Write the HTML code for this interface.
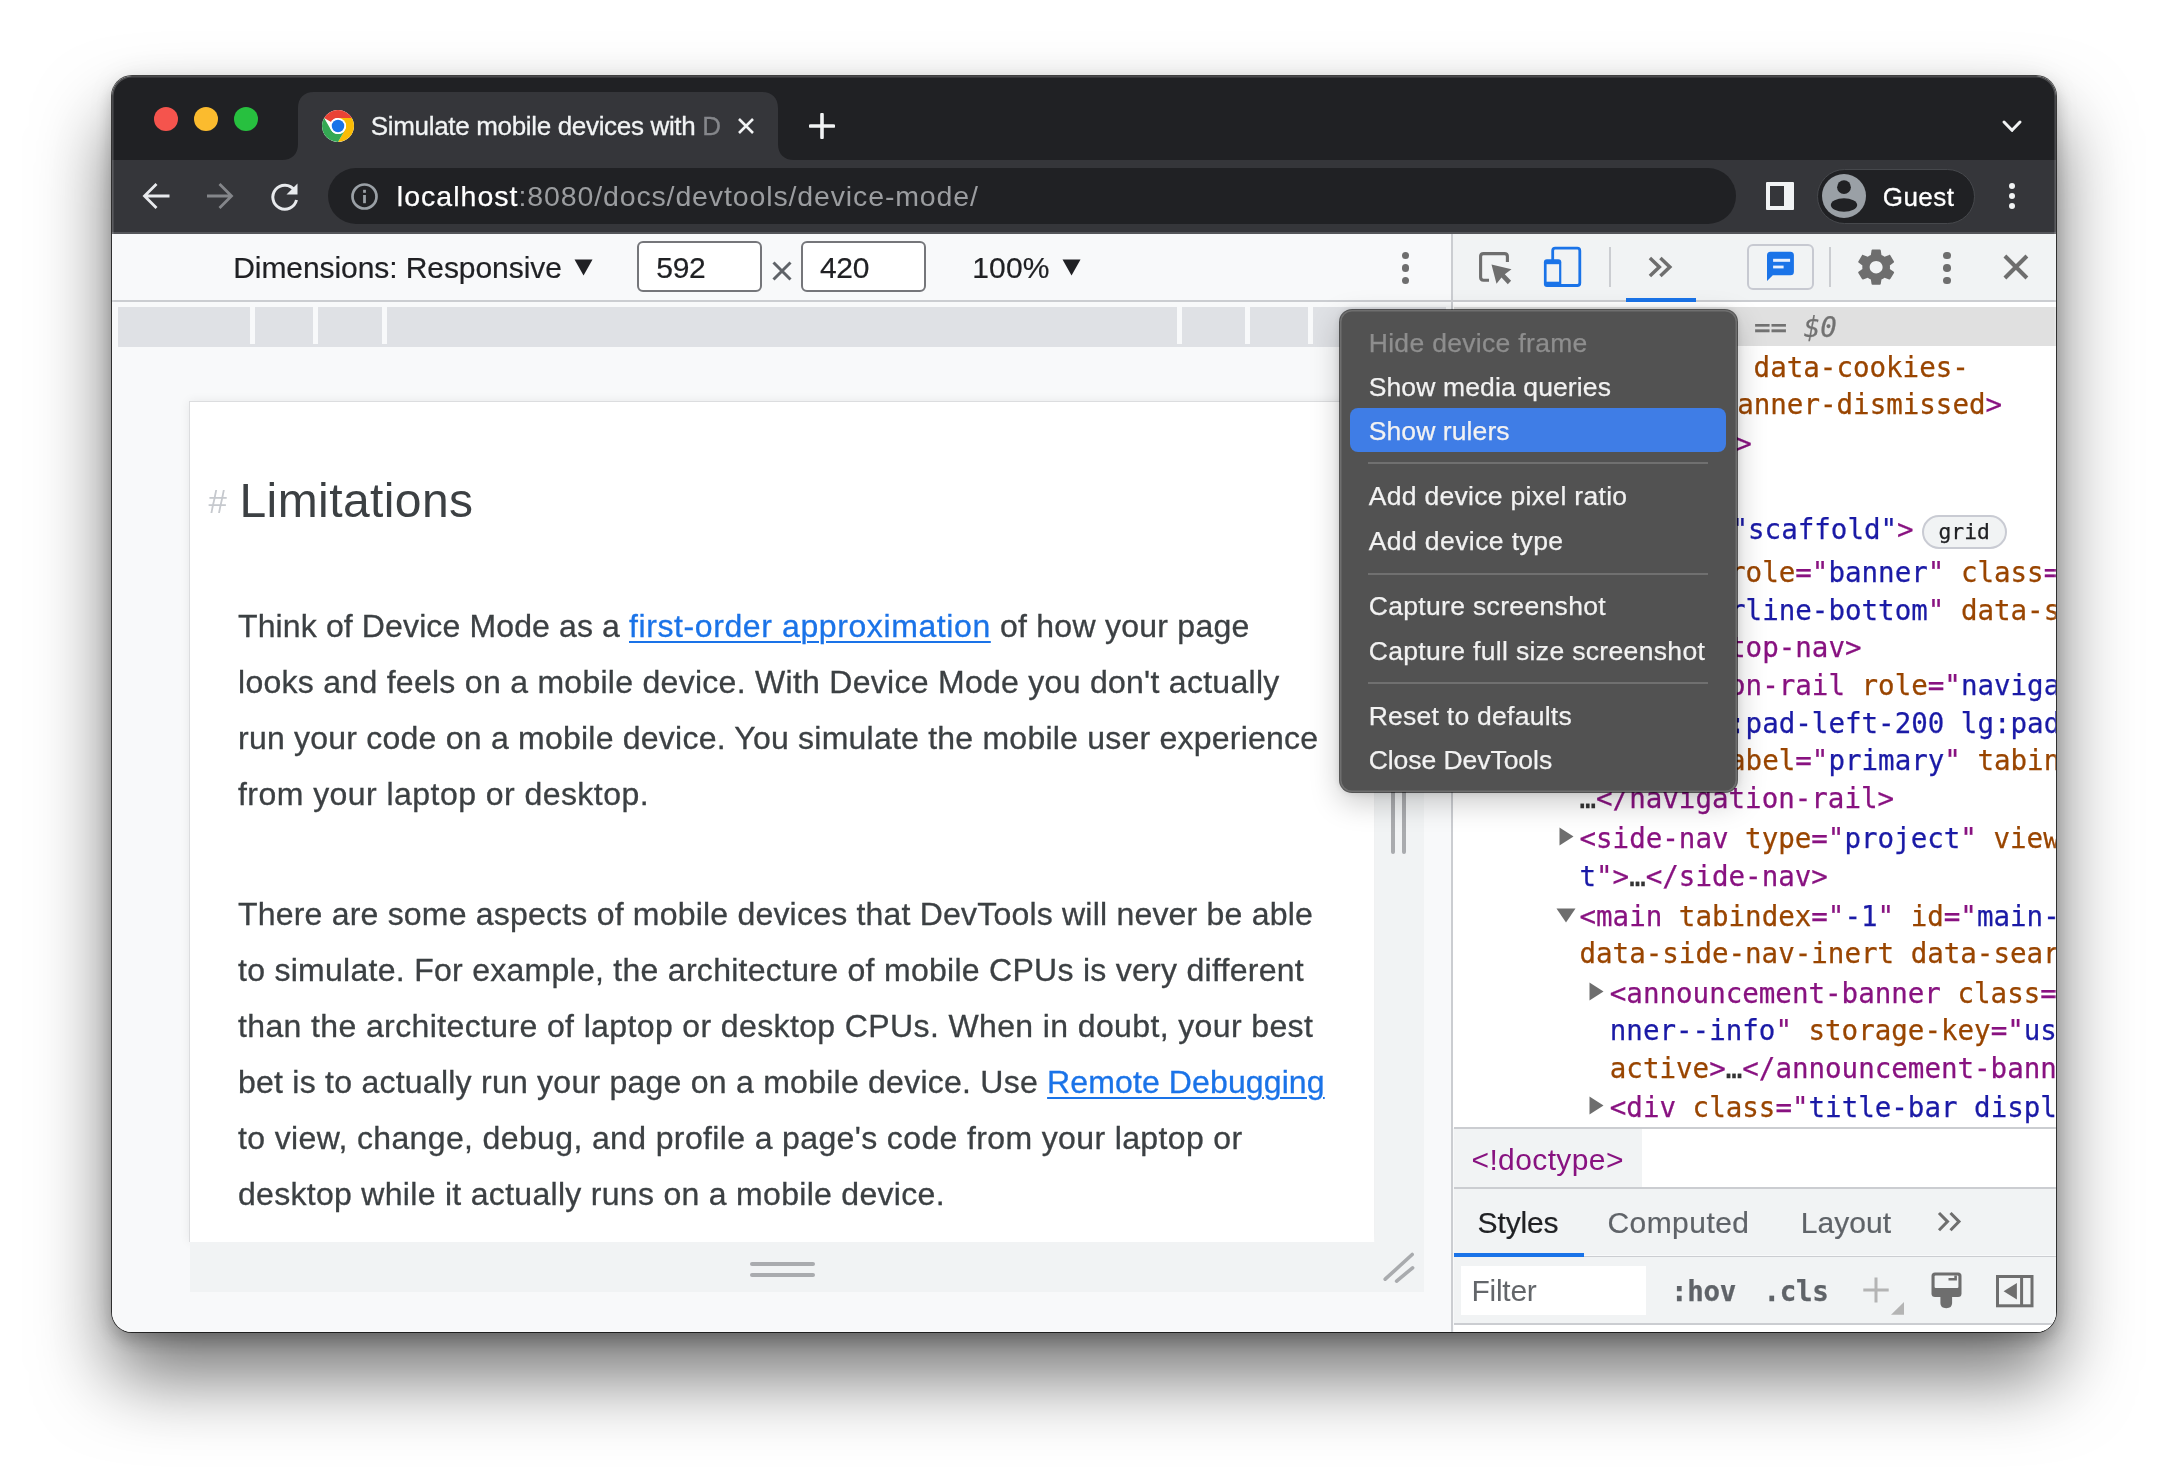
<!DOCTYPE html>
<html lang="en"><head><meta charset="utf-8"><title>Simulate mobile devices with Device Mode</title>
<style>
html,body{margin:0;padding:0}
body{width:2168px;height:1480px;background:#fff;position:relative;overflow:hidden}
.t{position:absolute;white-space:pre;margin:0;line-height:1}
.s{font-family:"Liberation Sans",sans-serif}
.m{font-family:"DejaVu Sans Mono","Liberation Mono",monospace;-webkit-text-stroke:0.25px}
.r{position:absolute;box-sizing:border-box}
#shadow{position:absolute;left:112px;top:76px;width:1944px;height:1256px;border-radius:20px;
 box-shadow:0 0 0 1px rgba(0,0,0,.72),0 8px 16px rgba(0,0,0,.2),0 0 30px rgba(0,0,0,.06),0 45px 76px rgba(0,0,0,.54)}
#win{position:absolute;left:112px;top:76px;width:1944px;height:1256px;border-radius:20px;overflow:hidden;background:#f8f9fa}
#in{position:absolute;left:-112px;top:-76px;width:2168px;height:1480px;will-change:transform}
.tg{color:#881280}.an{color:#994500}.av{color:#1a1aa6}.dk{color:#333}
a{color:#1a73e8;text-decoration:underline;text-decoration-thickness:2px;text-underline-offset:4px}
</style></head><body>
<div id="shadow"></div>
<div id="win"><div id="in">
<div class="r" style="left:112px;top:76px;width:1944px;height:84px;background:#202124;"></div>
<div class="r" style="left:112px;top:160px;width:1944px;height:73px;background:#35363a;"></div>
<div class="r" style="left:112px;top:231.7px;width:1944px;height:2.1px;background:#55565a;"></div>
<div class="r" style="left:154px;top:107px;width:24px;height:24px;background:#f5544d;border-radius:50%"></div>
<div class="r" style="left:194px;top:107px;width:24px;height:24px;background:#fbbb2e;border-radius:50%"></div>
<div class="r" style="left:234px;top:107px;width:24px;height:24px;background:#27c03f;border-radius:50%"></div>
<svg class="r" style="left:282px;top:92px" width="512" height="68" viewBox="0 0 512 68"><path d="M0 68 C10 68 16 62 16 52 L16 16 C16 6 22 0 32 0 L480 0 C490 0 496 6 496 16 L496 52 C496 62 502 68 512 68 Z" fill="#35363a"/></svg>
<svg class="r" style="left:322px;top:110px" width="32" height="32" viewBox="2 2 44 44">
<circle cx="24" cy="24" r="22" fill="#fff"/>
<path d="M4.95 13 A22 22 0 0 1 43.05 13 L24 13 A11 11 0 0 0 14.47 18.5 Z" fill="#ea4335"/>
<path d="M43.05 13 A22 22 0 0 1 24 46 L33.53 29.5 A11 11 0 0 0 33.53 18.5 L24 13 Z" fill="#fbbc04"/>
<path d="M24 46 A22 22 0 0 1 4.95 13 L14.47 29.5 A11 11 0 0 0 33.53 29.5 Z" fill="#34a853"/>
<circle cx="24" cy="24" r="11" fill="#fff"/>
<circle cx="24" cy="24" r="8.6" fill="#1a73e8"/>
</svg>
<div class="t s" style="left:370.80px;top:113.29px;font-size:26px;color:#f1f3f4;letter-spacing:-0.33px;-webkit-text-stroke:0.3px;">Simulate mobile devices with <span style="color:#85878b">D</span></div>
<svg class="r" style="left:736px;top:116px;" width="20" height="20" viewBox="0 0 20 20"><path d="M3 3 L17 17 M17 3 L3 17" stroke="#f1f3f4" stroke-width="2.6" fill="none"/></svg>
<svg class="r" style="left:809px;top:113px;" width="26" height="26" viewBox="0 0 26 26"><path d="M13 1.5 V24.5 M1.5 13 H24.5" stroke="#f1f3f4" stroke-width="3.6" stroke-linecap="round" fill="none"/></svg>
<svg class="r" style="left:2000px;top:118px;" width="24" height="16" viewBox="0 0 24 16"><path d="M4 4 L12 12.3 L20 4" stroke="#f1f3f4" stroke-width="3" fill="none" stroke-linecap="round" stroke-linejoin="round"/></svg>
<svg class="r" style="left:141px;top:181px;" width="30" height="30" viewBox="0 0 30 30"><path d="M28.5 15 H5 M15.5 3 L3.5 15 L15.5 27" stroke="#e8eaed" stroke-width="2.8" fill="none" stroke-linejoin="miter"/></svg>
<svg class="r" style="left:205px;top:181px;" width="30" height="30" viewBox="0 0 30 30"><path d="M2 15 H25.5 M14.5 3 L26.5 15 L14.5 27" stroke="#84868a" stroke-width="2.8" fill="none"/></svg>
<svg class="r" style="left:269px;top:181px;" width="32" height="32" viewBox="0 0 32 32"><path d="M25.5 9 A12 12 0 1 0 27.5 19" stroke="#e8eaed" stroke-width="3" fill="none"/><path d="M28.5 2.5 V13.5 H17.5 Z" fill="#e8eaed"/></svg>
<div class="r" style="left:328px;top:168px;width:1408px;height:56px;background:#202124;border-radius:28px"></div>
<svg class="r" style="left:350px;top:182px;" width="29" height="29" viewBox="0 0 29 29"><circle cx="14.5" cy="14.5" r="12" stroke="#9aa0a6" stroke-width="2.7" fill="none"/><rect x="13.1" y="13" width="2.8" height="8.2" fill="#9aa0a6"/><rect x="13.1" y="7.8" width="2.8" height="3" fill="#9aa0a6"/></svg>
<div class="t s" style="left:396.80px;top:182.37px;font-size:28.5px;color:#fff;letter-spacing:1.024px;-webkit-text-stroke:0.25px;">localhost</div>
<div class="t s" style="left:518.50px;top:182.37px;font-size:28.5px;color:#9b9da0;letter-spacing:0.868px;">:8080/docs/devtools/device-mode/</div>
<div class="r" style="left:1766px;top:182px;width:28px;height:28px;background:#f1f3f4;border-radius:1px"></div>
<div class="r" style="left:1770px;top:186px;width:14px;height:20px;background:#35363a;"></div>
<div class="r" style="left:1817px;top:168.8px;width:158px;height:55px;background:#202124;border-radius:28px;border:1.5px solid #46484c"></div>
<svg class="r" style="left:1822px;top:174px" width="44" height="44" viewBox="0 0 44 44">
<circle cx="22" cy="22" r="22" fill="#9aa0a6"/><g fill="#202124"><circle cx="22" cy="13.2" r="6.9"/><ellipse cx="22" cy="31" rx="13.2" ry="6.7"/></g></svg>
<div class="t s" style="left:1882.80px;top:183.99px;font-size:26px;color:#fff;letter-spacing:0.425px;-webkit-text-stroke:0.3px;">Guest</div>
<div class="r" style="left:2008.8px;top:183.0px;width:6.4px;height:6.4px;background:#f1f3f4;border-radius:50%"></div>
<div class="r" style="left:2008.8px;top:192.9px;width:6.4px;height:6.4px;background:#f1f3f4;border-radius:50%"></div>
<div class="r" style="left:2008.8px;top:202.8px;width:6.4px;height:6.4px;background:#f1f3f4;border-radius:50%"></div>
<div class="r" style="left:112px;top:234px;width:1340px;height:66px;background:#f8f9fa;"></div>
<div class="r" style="left:112px;top:300px;width:1944px;height:2px;background:#cbcdd1;"></div>
<div class="t s" style="left:233.20px;top:252.91px;font-size:30px;color:#202124;letter-spacing:-0.071px;-webkit-text-stroke:0.2px;">Dimensions: Responsive</div>
<svg class="r" style="left:574px;top:259px;" width="19" height="17" viewBox="0 0 19 17"><path d="M0.5 0.5 H18.5 L9.5 16.5 Z" fill="#202124"/></svg>
<div class="r" style="left:637px;top:241px;width:125px;height:51px;background:#fff;border:2px solid #75767a;border-radius:6px"></div>
<div class="t s" style="left:656.30px;top:252.91px;font-size:30px;color:#202124;letter-spacing:-0.354px;-webkit-text-stroke:0.2px;">592</div>
<div class="r" style="left:801px;top:241px;width:125px;height:51px;background:#fff;border:2px solid #75767a;border-radius:6px"></div>
<div class="t s" style="left:820.00px;top:252.91px;font-size:30px;color:#202124;letter-spacing:-0.354px;-webkit-text-stroke:0.2px;">420</div>
<svg class="r" style="left:771px;top:260px;" width="22" height="22" viewBox="0 0 22 22"><path d="M2.5 2.5 L19.5 19.5 M19.5 2.5 L2.5 19.5" stroke="#5f6368" stroke-width="3" fill="none"/></svg>
<div class="t s" style="left:972.30px;top:252.91px;font-size:30px;color:#202124;letter-spacing:0.116px;-webkit-text-stroke:0.2px;">100%</div>
<svg class="r" style="left:1062px;top:259px;" width="19" height="17" viewBox="0 0 19 17"><path d="M0.5 0.5 H18.5 L9.5 16.5 Z" fill="#202124"/></svg>
<div class="r" style="left:1401.5px;top:252.10000000000002px;width:7.4px;height:7.4px;background:#6e6e6e;border-radius:50%"></div>
<div class="r" style="left:1401.5px;top:264.40000000000003px;width:7.4px;height:7.4px;background:#6e6e6e;border-radius:50%"></div>
<div class="r" style="left:1401.5px;top:277.0px;width:7.4px;height:7.4px;background:#6e6e6e;border-radius:50%"></div>
<div class="r" style="left:118px;top:307px;width:1328px;height:40px;background:#dfe1e5;"></div>
<div class="r" style="left:250px;top:307px;width:5px;height:37px;background:#f8f9fa;"></div>
<div class="r" style="left:313px;top:307px;width:5px;height:37px;background:#f8f9fa;"></div>
<div class="r" style="left:382px;top:307px;width:5px;height:37px;background:#f8f9fa;"></div>
<div class="r" style="left:1177px;top:307px;width:5px;height:37px;background:#f8f9fa;"></div>
<div class="r" style="left:1245px;top:307px;width:5px;height:37px;background:#f8f9fa;"></div>
<div class="r" style="left:1308px;top:307px;width:5px;height:37px;background:#f8f9fa;"></div>
<div class="r" style="left:189px;top:401px;width:1185px;height:841px;background:#fff;border-top:1px solid #dcdddf;border-left:1px solid #dcdddf;box-shadow:0 0 10px rgba(0,0,0,.07)"></div>
<div class="r" style="left:1375px;top:402px;width:49px;height:890px;background:#f1f3f4;"></div>
<div class="r" style="left:190px;top:1242px;width:1234px;height:50px;background:#f1f3f4;"></div>
<div class="r" style="left:1391px;top:790px;width:4px;height:64px;background:#a9abae;border-radius:2px"></div>
<div class="r" style="left:1402px;top:790px;width:4px;height:64px;background:#a9abae;border-radius:2px"></div>
<div class="r" style="left:750px;top:1262px;width:65px;height:4px;background:#a9abae;border-radius:2px"></div>
<div class="r" style="left:750px;top:1273px;width:65px;height:4px;background:#a9abae;border-radius:2px"></div>
<svg class="r" style="left:1382px;top:1250px;" width="36" height="36" viewBox="0 0 36 36"><path d="M3.2 29.2 L30.2 4.5 M14.6 31.2 L30.6 17.8" stroke="#a9abae" stroke-width="3.6" stroke-linecap="round" fill="none"/></svg>
<div class="t s" style="left:208.50px;top:485.07px;font-size:33px;color:#c6c9ce;">#</div>
<div class="t s" style="left:239.50px;top:477.37px;font-size:48px;color:#3c4043;letter-spacing:0.415px;">Limitations</div>
<div class="t s" style="left:238.00px;top:609.51px;font-size:32px;color:#3c4043;letter-spacing:0.126px;-webkit-text-stroke:0.3px;">Think of Device Mode as a </div>
<div class="t s" style="left:629.00px;top:609.51px;font-size:32px;color:#1a73e8;letter-spacing:0.6px;-webkit-text-stroke:0.3px;"><a>first-order approximation</a></div>
<div class="t s" style="left:990.80px;top:609.51px;font-size:32px;color:#3c4043;letter-spacing:0.259px;-webkit-text-stroke:0.3px;"> of how your page</div>
<div class="t s" style="left:238.00px;top:665.51px;font-size:32px;color:#3c4043;letter-spacing:0.279px;-webkit-text-stroke:0.3px;">looks and feels on a mobile device. With Device Mode you don't actually</div>
<div class="t s" style="left:238.00px;top:721.51px;font-size:32px;color:#3c4043;letter-spacing:0.227px;-webkit-text-stroke:0.3px;">run your code on a mobile device. You simulate the mobile user experience</div>
<div class="t s" style="left:238.00px;top:777.51px;font-size:32px;color:#3c4043;letter-spacing:0.449px;-webkit-text-stroke:0.3px;">from your laptop or desktop.</div>
<div class="t s" style="left:238.00px;top:897.51px;font-size:32px;color:#3c4043;letter-spacing:0.204px;-webkit-text-stroke:0.3px;">There are some aspects of mobile devices that DevTools will never be able</div>
<div class="t s" style="left:238.00px;top:953.51px;font-size:32px;color:#3c4043;letter-spacing:0.278px;-webkit-text-stroke:0.3px;">to simulate. For example, the architecture of mobile CPUs is very different</div>
<div class="t s" style="left:238.00px;top:1009.51px;font-size:32px;color:#3c4043;letter-spacing:0.377px;-webkit-text-stroke:0.3px;">than the architecture of laptop or desktop CPUs. When in doubt, your best</div>
<div class="t s" style="left:238.00px;top:1065.51px;font-size:32px;color:#3c4043;letter-spacing:0.245px;-webkit-text-stroke:0.3px;">bet is to actually run your page on a mobile device. Use </div>
<div class="t s" style="left:1047.10px;top:1065.51px;font-size:32px;color:#1a73e8;letter-spacing:0.117px;-webkit-text-stroke:0.3px;"><a>Remote Debugging</a></div>
<div class="t s" style="left:238.00px;top:1121.51px;font-size:32px;color:#3c4043;letter-spacing:0.367px;-webkit-text-stroke:0.3px;">to view, change, debug, and profile a page's code from your laptop or</div>
<div class="t s" style="left:238.00px;top:1177.51px;font-size:32px;color:#3c4043;letter-spacing:0.298px;-webkit-text-stroke:0.3px;">desktop while it actually runs on a mobile device.</div>
<div class="r" style="left:1451px;top:234px;width:2px;height:1100px;background:#cbcdd1;"></div>
<div class="r" style="left:1453px;top:234px;width:603px;height:66px;background:#f1f3f4;"></div>
<div class="r" style="left:1453px;top:302px;width:603px;height:826px;background:#fff;"></div>
<svg class="r" style="left:1470px;top:240px;" width="50" height="50" viewBox="1470 240 50 50"><path d="M1507.4 262 V256.5 Q1507.4 253.6 1504.5 253.6 H1483.5 Q1480.6 253.6 1480.6 256.5 V277.3 Q1480.6 280.2 1483.5 280.2 H1489" stroke="#6e6e6e" stroke-width="3.1" fill="none"/><path d="M1491.5 264.6 L1511.5 269.2 L1504.8 274.2 L1511.1 280.8 L1507.8 284.2 L1501.5 277.5 L1496.5 283.8 Z" fill="#6e6e6e"/></svg>
<svg class="r" style="left:1540px;top:240px;" width="50" height="50" viewBox="1540 240 50 50"><rect x="1552.7" y="248.2" width="27.1" height="37.3" rx="2.5" stroke="#1a73e8" stroke-width="2.8" fill="none"/><rect x="1543.9" y="259.2" width="17.4" height="27.7" rx="3" fill="#1a73e8"/><rect x="1546.6" y="264.2" width="12.5" height="17.5" fill="#f1f3f4"/></svg>
<div class="r" style="left:1609px;top:247px;width:2px;height:40px;background:#cbcdd1;"></div>
<svg class="r" style="left:1640px;top:250px;" width="40" height="34" viewBox="1640 250 40 34"><path d="M1649.9 258.1 L1659.3 267 L1649.9 275.9 M1660.4 258.1 L1669.8 267 L1660.4 275.9" stroke="#6e6e6e" stroke-width="3.5" fill="none"/></svg>
<div class="r" style="left:1626px;top:297.5px;width:70px;height:4.5px;background:#1a73e8;"></div>
<div class="r" style="left:1747px;top:244.4px;width:66.7px;height:45.2px;background:transparent;border:2px solid #c7c9d1;border-radius:6px"></div>
<svg class="r" style="left:1760px;top:246px;" width="40" height="40" viewBox="1760 246 40 40"><path d="M1770.5 251.7 H1790.4 Q1793.9 251.7 1793.9 255.2 V271.8 Q1793.9 275.3 1790.4 275.3 H1772.8 L1767 280.9 V255.2 Q1767 251.700 1770.5 251.7 Z" fill="#1a73e8"/><rect x="1773.1" y="258.8" width="17" height="3" fill="#e8f0fe"/><rect x="1773.1" y="265.6" width="10.500" height="2.800" fill="#e8f0fe"/></svg>
<div class="r" style="left:1829px;top:247px;width:2px;height:40px;background:#cbcdd1;"></div>
<svg class="r" style="left:1853.85px;top:245.8px" width="44.3" height="42.4" viewBox="0 0 24 24" preserveAspectRatio="none"><path fill="#6e6e6e" d="M19.43 12.98c.04-.32.07-.64.07-.98s-.03-.66-.07-.98l2.110-1.650c.19-.15.24-.42.12-.64l-2-3.460c-.12-.22-.39-.3-.61-.22l-2.490 1c-.52-.4-1.080-.73-1.690-.98l-.38-2.650C14.460 2.180 14.250 2 14 2h-4c-.25 0-.46.180-.49.420l-.38 2.650c-.61.250-1.170.59-1.690.98l-2.490-1c-.23-.09-.49 0-.61.220l-2 3.460c-.13.220-.07.490.12.640l2.110 1.650c-.04.320-.07.650-.07.980s.03.660.07.980l-2.110 1.650c-.19.150-.24.420-.12.640l2 3.460c.12.220.39.300.61.220l2.490-1c.52.400 1.080.730 1.690.980l.38 2.650c.03.240.24.420.49.420h4c.25 0 .46-.18.49-.42l.38-2.650c.61-.25 1.170-.59 1.690-.98l2.490 1c.23.090.49 0 .61-.22l2-3.460c.12-.22.070-.49-.12-.64l-2.110-1.650zM12 15.500c-1.930 0-3.500-1.570-3.500-3.500s1.570-3.500 3.500-3.500 3.500 1.570 3.500 3.500-1.570 3.500-3.500 3.500z"/></svg>
<div class="r" style="left:1943.4px;top:251.7px;width:7.6px;height:7.6px;background:#6e6e6e;border-radius:50%"></div>
<div class="r" style="left:1943.4px;top:264.2px;width:7.6px;height:7.6px;background:#6e6e6e;border-radius:50%"></div>
<div class="r" style="left:1943.4px;top:276.8px;width:7.6px;height:7.6px;background:#6e6e6e;border-radius:50%"></div>
<svg class="r" style="left:2000px;top:250px;" width="32" height="34" viewBox="2000 250 32 34"><path d="M2004.9 256 L2026.900 278 M2026.900 256 L2004.900 278" stroke="#6e6e6e" stroke-width="4" fill="none"/></svg>
<div class="r" style="left:1454px;top:307px;width:602px;height:38.5px;background:#e0e0e0;"></div>
<div class="t m" style="left:1754.00px;top:314.04px;font-size:27.5px;color:#333;"><span style="color:#727272">== <i>$0</i></span></div>
<div class="t m" style="left:1753.60px;top:353.94px;font-size:27.5px;color:#333;"><span class="an">data-cookies-</span></div>
<div class="t m" style="left:1720.64px;top:391.44px;font-size:27.5px;color:#333;"><span class="an">banner-dismissed</span><span class="tg">&gt;</span></div>
<div class="t m" style="left:1735.30px;top:430.13px;font-size:27.5px;color:#333;"><span class="tg">&gt;</span></div>
<div class="t m" style="left:1731.50px;top:515.94px;font-size:27.5px;color:#333;"><span class="av">"scaffold"</span><span class="tg">&gt;</span></div>
<div class="r" style="left:1921.5px;top:514.6px;width:85.5px;height:34px;background:#f1f3f4;border:2px solid #c9cbd3;border-radius:18px"></div>
<div class="t m" style="left:1938.50px;top:520.78px;font-size:21.3px;color:#202124;">grid</div>
<div class="t m" style="left:1729.07px;top:559.44px;font-size:27.5px;color:#333;"><span class="an">role</span><span class="tg">="</span><span class="av">banner</span><span class="tg">"</span> <span class="an">class</span><span class="tg">=</span></div>
<div class="t m" style="left:1729.07px;top:596.94px;font-size:27.5px;color:#333;"><span class="av">rline-bottom</span><span class="tg">"</span> <span class="an">data-s</span></div>
<div class="t m" style="left:1729.07px;top:634.44px;font-size:27.5px;color:#333;"><span class="tg">top-nav&gt;</span></div>
<div class="t m" style="left:1729.07px;top:672.44px;font-size:27.5px;color:#333;"><span class="tg">on-rail</span> <span class="an">role</span><span class="tg">="</span><span class="av">naviga</span></div>
<div class="t m" style="left:1729.07px;top:709.94px;font-size:27.5px;color:#333;"><span class="av">:pad-left-200 lg:pad</span></div>
<div class="t m" style="left:1729.07px;top:747.44px;font-size:27.5px;color:#333;"><span class="an">abel</span><span class="tg">="</span><span class="av">primary</span><span class="tg">"</span> <span class="an">tabin</span></div>
<div class="t m" style="left:1579.50px;top:784.94px;font-size:27.5px;color:#333;">…<span class="tg">&lt;/navigation-rail&gt;</span></div>
<div class="t m" style="left:1579.50px;top:825.14px;font-size:27.5px;color:#333;"><span class="tg">&lt;side-nav</span> <span class="an">type</span><span class="tg">="</span><span class="av">project</span><span class="tg">"</span> <span class="an">view</span></div>
<div class="t m" style="left:1579.50px;top:862.64px;font-size:27.5px;color:#333;"><span class="av">t</span><span class="tg">"&gt;</span>…<span class="tg">&lt;/side-nav&gt;</span></div>
<div class="t m" style="left:1579.50px;top:902.94px;font-size:27.5px;color:#333;"><span class="tg">&lt;main</span> <span class="an">tabindex</span><span class="tg">="</span><span class="av">-1</span><span class="tg">"</span> <span class="an">id</span><span class="tg">="</span><span class="av">main-</span></div>
<div class="t m" style="left:1579.50px;top:940.44px;font-size:27.5px;color:#333;"><span class="an">data-side-nav-inert data-sear</span></div>
<div class="t m" style="left:1609.80px;top:979.74px;font-size:27.5px;color:#333;"><span class="tg">&lt;announcement-banner</span> <span class="an">class</span><span class="tg">=</span></div>
<div class="t m" style="left:1609.80px;top:1017.24px;font-size:27.5px;color:#333;"><span class="av">nner--info</span><span class="tg">"</span> <span class="an">storage-key</span><span class="tg">="</span><span class="av">us</span></div>
<div class="t m" style="left:1609.80px;top:1054.73px;font-size:27.5px;color:#333;"><span class="an">active</span><span class="tg">&gt;</span>…<span class="tg">&lt;/announcement-bann</span></div>
<div class="t m" style="left:1609.80px;top:1093.73px;font-size:27.5px;color:#333;"><span class="tg">&lt;div</span> <span class="an">class</span><span class="tg">="</span><span class="av">title-bar displ</span></div>
<svg class="r" style="left:1559px;top:827px;" width="15" height="19" viewBox="0 0 15 19"><path d="M0.5 0.5 L14.5 9.5 L0.5 18.5 Z" fill="#6e6e6e"/></svg>
<svg class="r" style="left:1556px;top:908px;" width="20" height="15" viewBox="0 0 20 15"><path d="M0.5 0.5 H19.5 L10 14.5 Z" fill="#6e6e6e"/></svg>
<svg class="r" style="left:1589px;top:982px;" width="15" height="19" viewBox="0 0 15 19"><path d="M0.5 0.5 L14.5 9.5 L0.5 18.5 Z" fill="#6e6e6e"/></svg>
<svg class="r" style="left:1589px;top:1096px;" width="15" height="19" viewBox="0 0 15 19"><path d="M0.5 0.5 L14.5 9.5 L0.5 18.5 Z" fill="#6e6e6e"/></svg>
<div class="r" style="left:1454px;top:1127px;width:602px;height:2px;background:#cbcdd1;"></div>
<div class="r" style="left:1454px;top:1129px;width:602px;height:58px;background:#fff;"></div>
<div class="r" style="left:1454px;top:1129px;width:188px;height:58px;background:#f1f3f4;"></div>
<div class="t s" style="left:1471.50px;top:1145.40px;font-size:30px;color:#881280;letter-spacing:0.385px;">&lt;!doctype&gt;</div>
<div class="r" style="left:1454px;top:1187px;width:602px;height:2px;background:#cbcdd1;"></div>
<div class="r" style="left:1454px;top:1189px;width:602px;height:66px;background:#f1f3f4;"></div>
<div class="t s" style="left:1477.60px;top:1207.81px;font-size:30px;color:#202124;letter-spacing:-0.134px;-webkit-text-stroke:0.2px;">Styles</div>
<div class="t s" style="left:1607.40px;top:1207.81px;font-size:30px;color:#5f6368;letter-spacing:0.46px;-webkit-text-stroke:0.2px;">Computed</div>
<div class="t s" style="left:1800.80px;top:1207.81px;font-size:30px;color:#5f6368;letter-spacing:0.02px;-webkit-text-stroke:0.2px;">Layout</div>
<svg class="r" style="left:1930px;top:1205px;" width="40" height="34" viewBox="1930 1205 40 34"><path d="M1939 1213 L1947.500 1221.600 L1939 1230.200 M1950.500 1213 L1959 1221.600 L1950.500 1230.200" stroke="#6e6e6e" stroke-width="3" fill="none"/></svg>
<div class="r" style="left:1454px;top:1256px;width:602px;height:67px;background:#f1f3f4;"></div>
<div class="r" style="left:1454px;top:1255.5px;width:602px;height:1.8px;background:#cbcdd1;"></div>
<div class="r" style="left:1454px;top:1253px;width:130px;height:4px;background:#1a73e8;"></div>
<div class="r" style="left:1461px;top:1265.5px;width:185px;height:49px;background:#fff;"></div>
<div class="t s" style="left:1471.50px;top:1275.81px;font-size:30px;color:#63666a;letter-spacing:-0.262px;">Filter</div>
<div class="t m" style="left:1671.00px;top:1277.53px;font-size:27.5px;color:#5f6368;font-weight:700;letter-spacing:-0.3px;">:hov</div>
<div class="t m" style="left:1763.50px;top:1277.53px;font-size:27.5px;color:#5f6368;font-weight:700;letter-spacing:-0.3px;">.cls</div>
<svg class="r" style="left:1860px;top:1274px;" width="32" height="32" viewBox="1860 1274 32 32"><path d="M1876 1277.400 V1302.600 M1863.300 1290 H1888.700" stroke="#b4b4b4" stroke-width="3" fill="none"/></svg>
<svg class="r" style="left:1890px;top:1301px;" width="15" height="15" viewBox="1890 1301 15 15"><path d="M1904 1302 V1314.700 H1891 Z" fill="#b4b4b4"/></svg>
<svg class="r" style="left:1928px;top:1270px;" width="38" height="40" viewBox="1928 1270 38 40"><rect x="1931.500" y="1272.400" width="30" height="24.600" rx="3.5" fill="#6e6e6e"/><rect x="1934.600" y="1275.500" width="23.800" height="12.500" rx="1" fill="#f1f3f4"/><path d="M1948.500 1279.300 H1955.600 V1275.500" stroke="#6e6e6e" stroke-width="2.6" fill="none"/><path d="M1940.400 1296 H1952.100 V1303 Q1952.100 1308.200 1946.250 1308.200 Q1940.400 1308.200 1940.400 1303 Z" fill="#6e6e6e"/></svg>
<svg class="r" style="left:1994px;top:1273px;" width="42" height="36" viewBox="1994 1273 42 36"><rect x="1997.500" y="1276.500" width="34.500" height="29.300" stroke="#6e6e6e" stroke-width="3" fill="none"/><path d="M2021.600 1276.500 V1305.800" stroke="#6e6e6e" stroke-width="3"/><path d="M2016.900 1283 V1299.500 L2003.600 1291.250 Z" fill="#6e6e6e"/></svg>
<div class="r" style="left:1454px;top:1322.5px;width:602px;height:2px;background:#cbcdd1;"></div>
<div class="r" style="left:1454px;top:1324.5px;width:602px;height:8px;background:#fff;"></div>
<div class="r" style="left:1340px;top:310px;width:397px;height:482px;background:#525252;border-radius:12px;box-shadow:0 0 0 1px rgba(0,0,0,.6),inset 0 0 0 1.5px rgba(255,255,255,.17),0 10px 30px rgba(0,0,0,.22),0 0 8px rgba(0,0,0,.14)"></div>
<div class="r" style="left:1350px;top:408px;width:376px;height:44px;background:#3f7de6;border-radius:8px"></div>
<div class="t s" style="left:1368.70px;top:330.37px;font-size:26.5px;color:#8e8e8e;letter-spacing:0.319px;-webkit-text-stroke:0.25px;">Hide device frame</div>
<div class="t s" style="left:1368.70px;top:373.87px;font-size:26.5px;color:#f2f2f2;letter-spacing:0.127px;-webkit-text-stroke:0.25px;">Show media queries</div>
<div class="t s" style="left:1368.70px;top:417.77px;font-size:26.5px;color:#f2f2f2;letter-spacing:0.098px;-webkit-text-stroke:0.25px;">Show rulers</div>
<div class="t s" style="left:1368.70px;top:483.37px;font-size:26.5px;color:#f2f2f2;letter-spacing:0.309px;-webkit-text-stroke:0.25px;">Add device pixel ratio</div>
<div class="t s" style="left:1368.70px;top:527.77px;font-size:26.5px;color:#f2f2f2;letter-spacing:0.415px;-webkit-text-stroke:0.25px;">Add device type</div>
<div class="t s" style="left:1368.70px;top:593.37px;font-size:26.5px;color:#f2f2f2;letter-spacing:0.334px;-webkit-text-stroke:0.25px;">Capture screenshot</div>
<div class="t s" style="left:1368.70px;top:637.67px;font-size:26.5px;color:#f2f2f2;letter-spacing:0.339px;-webkit-text-stroke:0.25px;">Capture full size screenshot</div>
<div class="t s" style="left:1368.70px;top:703.37px;font-size:26.5px;color:#f2f2f2;letter-spacing:0.26px;-webkit-text-stroke:0.25px;">Reset to defaults</div>
<div class="t s" style="left:1368.70px;top:747.37px;font-size:26.5px;color:#f2f2f2;letter-spacing:-0.051px;-webkit-text-stroke:0.25px;">Close DevTools</div>
<div class="r" style="left:1368px;top:462px;width:340px;height:2px;background:#707070;"></div>
<div class="r" style="left:1368px;top:572.5px;width:340px;height:2px;background:#707070;"></div>
<div class="r" style="left:1368px;top:682px;width:340px;height:2px;background:#707070;"></div>
<div class="r" style="left:112px;top:76px;width:1944px;height:1256px;background:transparent;border-radius:20px;box-shadow:inset 0 0 0 1.6px rgba(255,255,255,.19);pointer-events:none"></div>
</div></div>
</body></html>
